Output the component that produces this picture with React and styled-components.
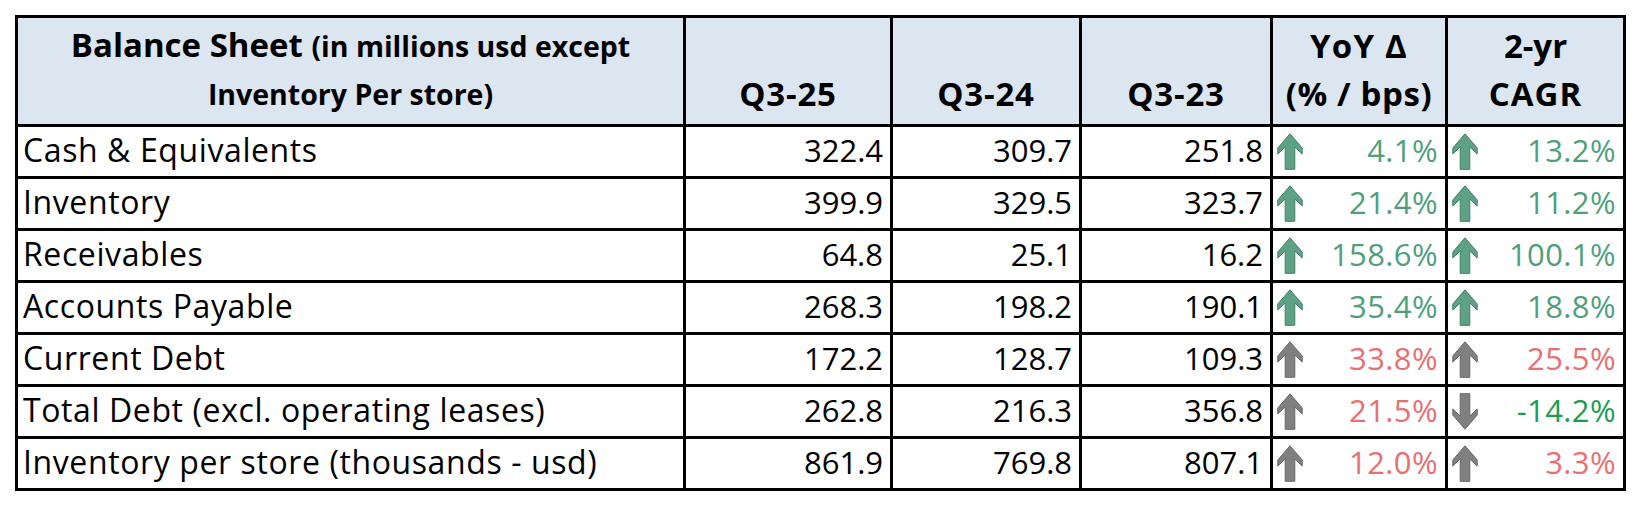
import React from "react";
import styled, { createGlobalStyle } from "styled-components";

const GlobalStyle = createGlobalStyle`
  html, body {
    margin: 0;
    padding: 0;
    background: #ffffff;
  }
  body {
    font-family: "Open Sans", "Noto Sans", sans-serif;
    color: #000;
  }
`;

const Page = styled.div`
  padding: 15px 0 0 15px;
`;

const Sheet = styled.div`
  display: grid;
  grid-template-columns: 668px 207px 189px 191px 175px 178px;
  grid-template-rows: 109px repeat(7, 52px);
  width: max-content;
  border-top: 3px solid #000;
  border-left: 3px solid #000;
`;

const Cell = styled.div`
  box-sizing: border-box;
  border-right: 3px solid #000;
  border-bottom: 3px solid #000;
  display: flex;
  align-items: center;
  overflow: hidden;
  white-space: nowrap;
`;

const HeadCell = styled(Cell)`
  background: #dce6f1;
  flex-direction: column;
  justify-content: flex-end;
  align-items: center;
  text-align: center;
  font-weight: 700;
  padding-bottom: 6px;
`;

const HeadLine = styled.div`
  font-size: ${(p) => p.size || 33}px;
  line-height: 48px;
  letter-spacing: ${(p) => p.spacing || 0}px;
`;

const Small = styled.span`
  font-size: 28.5px;
`;

const Label = styled(Cell)`
  font-size: 32px;
  letter-spacing: 0.6px;
  padding: 0 0 4px 5px;
`;

const Num = styled(Cell)`
  justify-content: flex-end;
  font-size: 31px;
  padding: 0 7px 4px 0;
`;

const Delta = styled(Cell)`
  justify-content: space-between;
  padding: 0 7px 4px 4px;
  font-size: 31px;
  letter-spacing: 0.4px;
  color: ${(p) => p.tone};
`;

const ArrowSvg = styled.svg`
  display: block;
  width: 26px;
  height: 37px;
  min-width: 26px;
  flex: 0 0 26px;
  margin-top: 4px;
`;

const tones = {
  good: "#4f9f7c",
  bad: "#e97070",
  strong: "#1a9e50",
};

const arrowColors = {
  green: { fill: "#5ea286", stroke: "#437f68" },
  gray: { fill: "#808080", stroke: "#676767" },
};

// Excel-style "3 arrows" icon: broad chevron head on a thick shaft
const Arrow = ({ dir, color }) => {
  const c = arrowColors[color];
  const up = "13,0.8 25.2,15 25.2,21 17.8,14 17.8,36.3 8.2,36.3 8.2,14 0.8,21 0.8,15";
  const down = "13,36.2 25.2,22 25.2,16 17.8,23 17.8,0.7 8.2,0.7 8.2,23 0.8,16 0.8,22";
  return (
    <ArrowSvg viewBox="0 0 26 37">
      <polygon
        points={dir === "up" ? up : down}
        fill={c.fill}
        stroke={c.stroke}
        strokeWidth="1"
        strokeLinejoin="round"
      />
    </ArrowSvg>
  );
};

const rows = [
  {
    label: "Cash & Equivalents",
    q25: "322.4",
    q24: "309.7",
    q23: "251.8",
    yoy: { v: "4.1%", dir: "up", arrow: "green", tone: "good" },
    cagr: { v: "13.2%", dir: "up", arrow: "green", tone: "good" },
  },
  {
    label: "Inventory",
    q25: "399.9",
    q24: "329.5",
    q23: "323.7",
    yoy: { v: "21.4%", dir: "up", arrow: "green", tone: "good" },
    cagr: { v: "11.2%", dir: "up", arrow: "green", tone: "good" },
  },
  {
    label: "Receivables",
    q25: "64.8",
    q24: "25.1",
    q23: "16.2",
    yoy: { v: "158.6%", dir: "up", arrow: "green", tone: "good" },
    cagr: { v: "100.1%", dir: "up", arrow: "green", tone: "good" },
  },
  {
    label: "Accounts Payable",
    q25: "268.3",
    q24: "198.2",
    q23: "190.1",
    yoy: { v: "35.4%", dir: "up", arrow: "green", tone: "good" },
    cagr: { v: "18.8%", dir: "up", arrow: "green", tone: "good" },
  },
  {
    label: "Current Debt",
    q25: "172.2",
    q24: "128.7",
    q23: "109.3",
    yoy: { v: "33.8%", dir: "up", arrow: "gray", tone: "bad" },
    cagr: { v: "25.5%", dir: "up", arrow: "gray", tone: "bad" },
  },
  {
    label: "Total Debt (excl. operating leases)",
    q25: "262.8",
    q24: "216.3",
    q23: "356.8",
    yoy: { v: "21.5%", dir: "up", arrow: "gray", tone: "bad" },
    cagr: { v: "-14.2%", dir: "down", arrow: "gray", tone: "strong" },
  },
  {
    label: "Inventory per store (thousands - usd)",
    q25: "861.9",
    q24: "769.8",
    q23: "807.1",
    yoy: { v: "12.0%", dir: "up", arrow: "gray", tone: "bad" },
    cagr: { v: "3.3%", dir: "up", arrow: "gray", tone: "bad" },
  },
];

const DeltaCell = ({ d }) => (
  <Delta tone={tones[d.tone]}>
    <Arrow dir={d.dir} color={d.arrow} />
    <span>{d.v}</span>
  </Delta>
);

const App = () => (
  <>
    <GlobalStyle />
    <Page>
      <Sheet>
        <HeadCell>
          <HeadLine>
            Balance Sheet <Small>(in millions usd except</Small>
          </HeadLine>
          <HeadLine size={28.5}>Inventory Per store)</HeadLine>
        </HeadCell>
        <HeadCell>
          <HeadLine spacing={0.8}>Q3-25</HeadLine>
        </HeadCell>
        <HeadCell>
          <HeadLine spacing={0.8}>Q3-24</HeadLine>
        </HeadCell>
        <HeadCell>
          <HeadLine spacing={0.8}>Q3-23</HeadLine>
        </HeadCell>
        <HeadCell>
          <HeadLine spacing={1.2}>YoY Δ</HeadLine>
          <HeadLine spacing={0.6}>(% / bps)</HeadLine>
        </HeadCell>
        <HeadCell>
          <HeadLine>2-yr</HeadLine>
          <HeadLine spacing={1}>CAGR</HeadLine>
        </HeadCell>

        {rows.map((r) => (
          <React.Fragment key={r.label}>
            <Label>{r.label}</Label>
            <Num>{r.q25}</Num>
            <Num>{r.q24}</Num>
            <Num>{r.q23}</Num>
            <DeltaCell d={r.yoy} />
            <DeltaCell d={r.cagr} />
          </React.Fragment>
        ))}
      </Sheet>
    </Page>
  </>
);

export default App;
